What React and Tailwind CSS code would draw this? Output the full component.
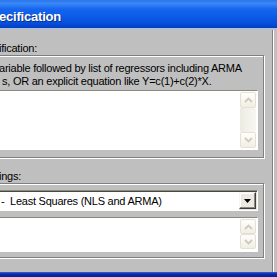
import React from 'react'

function Chevron({ up }) {
  return (
    <svg width="9" height="6" viewBox="0 0 9 6">
      <polyline
        points={up ? '1,5 4.5,1.5 8,5' : '1,1 4.5,4.5 8,1'}
        fill="none"
        stroke="#cdcabd"
        strokeWidth="1.8"
      />
    </svg>
  )
}

function ScrollBtn({ up, h = 'h-[16px]' }) {
  return (
    <div
      className={`${h} w-[16px] shrink-0 rounded-[2px] border border-[#e4e1d3] bg-[linear-gradient(180deg,#fefefd,#f0eee5)] flex items-center justify-center`}
    >
      <Chevron up={up} />
    </div>
  )
}

// classic sunken edit box with a disabled XP-style scrollbar
function EditBox({ height, track = true }) {
  return (
    <div
      className={`${height} ml-[9px] flex border border-t-[#8a8a7e] border-l-[#8a8a7e] border-b-white border-r-white shadow-[inset_1px_1px_0_#4a4a40,inset_-1px_-1px_0_#e6e3d8]`}
    >
      <div className="flex-1 bg-white" />
      <div className="w-[17px] flex flex-col py-px pr-px bg-white">
        <ScrollBtn up h={track ? 'h-[16px]' : 'h-[15px]'} />
        {track ? (
          <div className="flex-1 bg-[linear-gradient(90deg,#ecebe3,#f7f6f1)]" />
        ) : null}
        <ScrollBtn h={track ? 'h-[16px]' : 'h-[15px]'} />
      </div>
    </div>
  )
}

export default function App() {
  return (
    <div className="w-[277px] h-[277px] overflow-hidden bg-[#bfbfbf] flex flex-col font-['Liberation_Sans',Arial,sans-serif] text-[11px] tracking-[-0.24px] text-black">
      {/* title bar */}
      <div className="h-[28px] shrink-0 flex items-start pt-[10px] bg-[linear-gradient(180deg,#2a75ec_0%,#3b89f6_12%,#1766ee_32%,#0b5ae6_62%,#0650dc_82%,#033fc2_100%)]">
        <span className="-ml-[1px] text-white font-bold text-[13px] leading-[13px] tracking-[-0.2px] [text-shadow:1px_1px_0_#0d2f86]">
          ecification
        </span>
      </div>
      <div className="h-px shrink-0 bg-[#a9c0ea]" />

      <div className="flex-1 flex min-h-0">
        <div className="flex-1 -ml-[40px] pr-[8px] flex flex-col">
          <div className="mt-[13px] h-[13px] leading-[13px] pl-[39px] whitespace-nowrap">ification:</div>

          <div className="ml-[10px] border border-[#808080] shadow-[inset_1px_1px_0_#fff,1px_1px_0_#fff] pt-[6px] pb-[7px] pr-[5px]">
            <div className="leading-[13px] pl-[28px] whitespace-nowrap">
              ariable followed by list of regressors including ARMA
            </div>
            <div className="leading-[13px] pl-[31px] whitespace-nowrap">
              s, OR an explicit equation like Y=c(1)+c(2)*X.
            </div>
            <div className="mt-[2px]">
              <EditBox height="h-[60px]" />
            </div>
          </div>

          <div className="mt-[12px] h-[13px] leading-[13px] pl-[39px] whitespace-nowrap">ings:</div>

          <div className="ml-[10px] border border-[#808080] shadow-[inset_1px_1px_0_#fff,1px_1px_0_#fff] pt-[6px] pb-[5px] pr-[5px]">
            <div className="h-[21px] ml-[9px] flex border border-t-[#8a8a7e] border-l-[#8a8a7e] border-b-white border-r-white shadow-[inset_1px_1px_0_#4a4a40,inset_-1px_-1px_0_#e6e3d8]">
              <div className="flex-1 bg-white pl-[19px] pt-[3px] leading-[13px] whitespace-nowrap ml-px mt-px">
                - &nbsp;Least Squares (NLS and ARMA)
              </div>
              <div className="w-[17px] my-px mr-px bg-[#ebe9e1] border border-t-[#f6f5f0] border-l-[#f6f5f0] border-b-[#404040] border-r-[#404040] shadow-[inset_-1px_-1px_0_#8a8a80,inset_1px_1px_0_#fff] flex items-center justify-center">
                <svg width="7" height="4" viewBox="0 0 7 4">
                  <polygon points="0,0 7,0 3.5,4" fill="#000" />
                </svg>
              </div>
            </div>
            <div className="mt-[6px]">
              <EditBox height="h-[35px]" track={false} />
            </div>
          </div>
        </div>

        {/* etched separator */}
        <div className="w-[2px] mt-[1px] flex shrink-0">
          <div className="w-px bg-[#808080]" />
          <div className="w-px bg-white" />
        </div>
        <div className="w-[3px] shrink-0" />
      </div>

      <div className="h-[5px] shrink-0 bg-[linear-gradient(180deg,#3860d4,#0b2ba9_40%,#081f92)]" />
    </div>
  )
}
